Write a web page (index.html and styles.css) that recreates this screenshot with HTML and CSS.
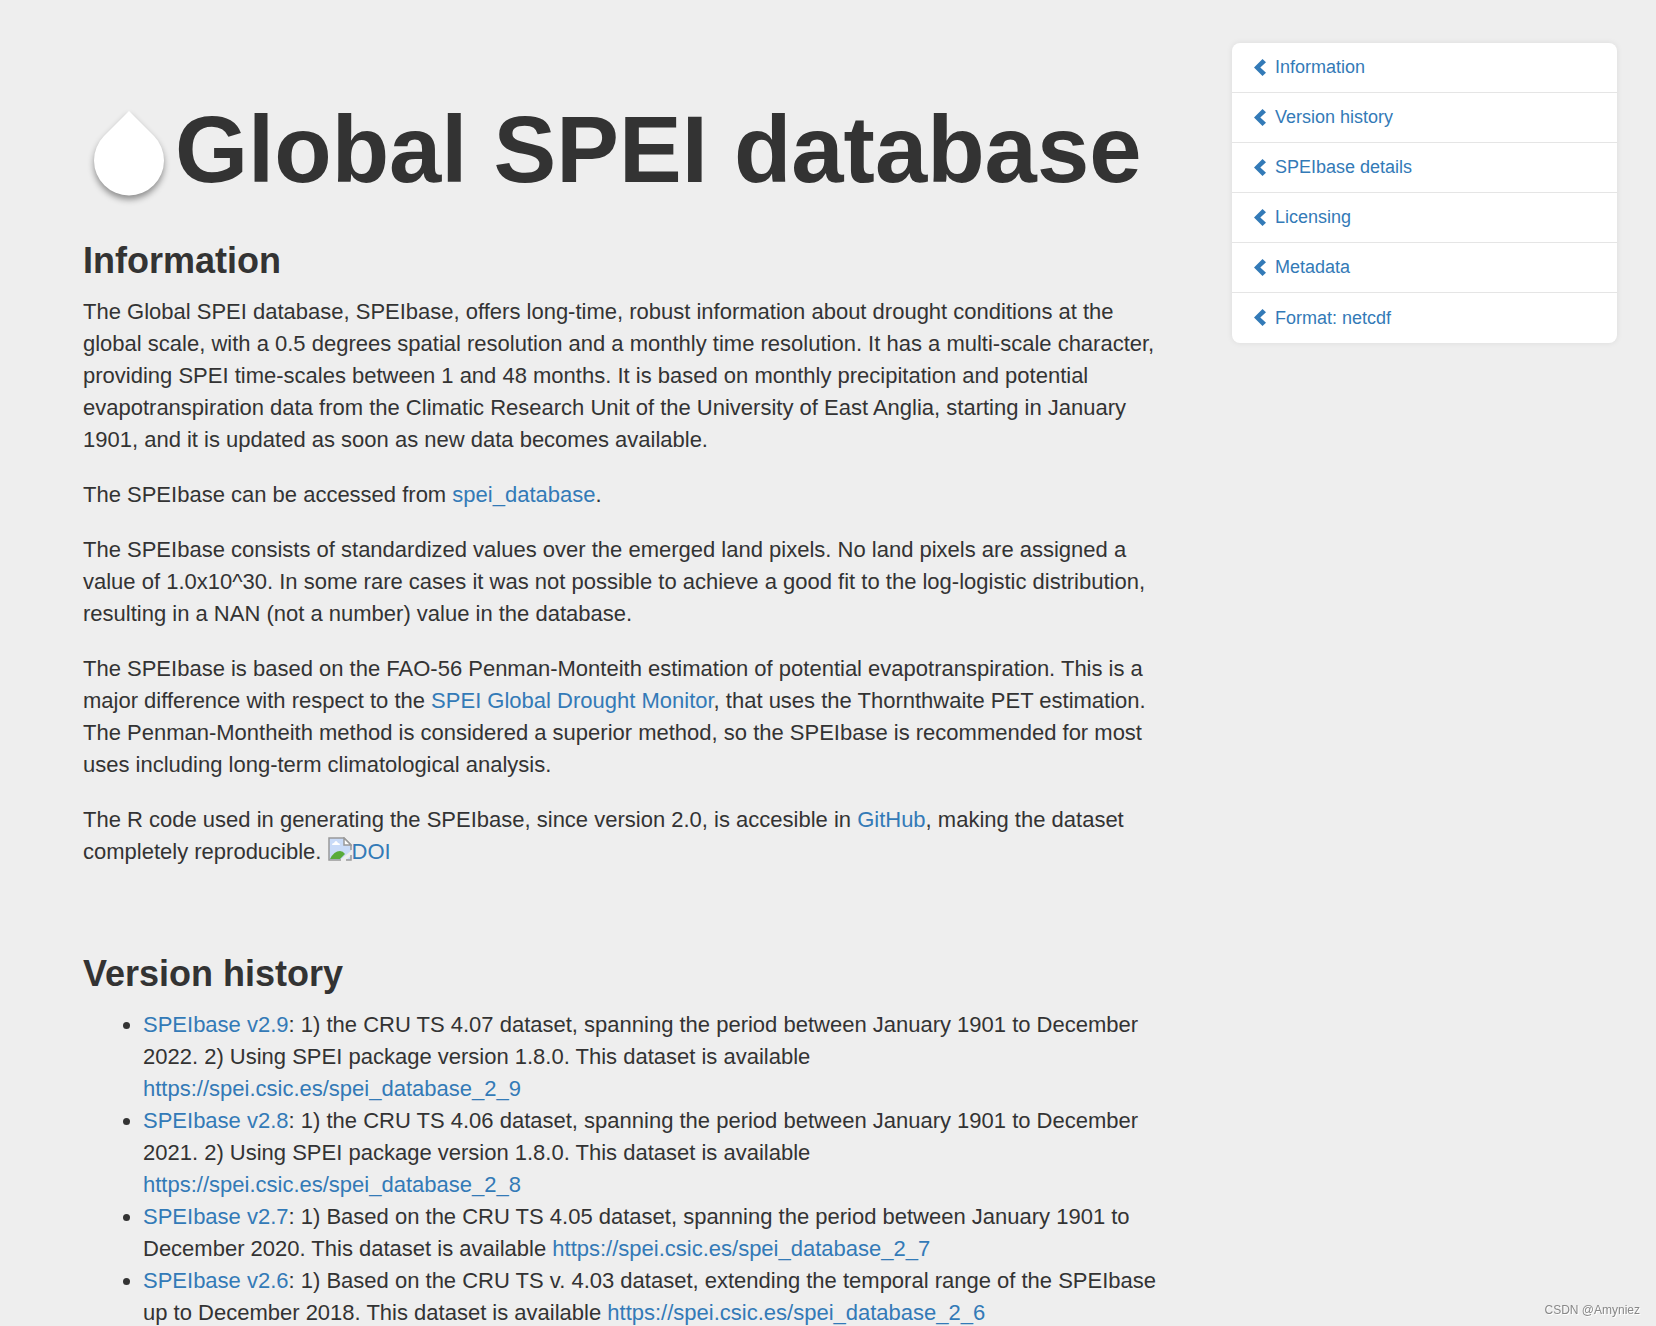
FILE: index.html
```html
<!DOCTYPE html>
<html lang="en">
<head>
    <meta charset="UTF-8">
    <meta name="viewport" content="width=device-width, initial-scale=1.0">
    <title>Global SPEI database</title>
    <link rel="stylesheet" href="styles.css">
</head>
<body>
    <svg class="sprite" width="0" height="0" aria-hidden="true">
        <symbol id="chevron" viewBox="0 0 12 17">
            <path d="M8.500 0 L12 3.300 L6.300 8.500 L12 13.700 L8.500 17 L0 8.500 Z" fill="currentColor"/>
        </symbol>
    </svg>
    <div class="page">
        <main class="content">
            <h1>
                <svg class="drop" viewBox="0 0 92 104" aria-hidden="true">
                    <path d="M46 13 L71 38 A35 35 0 1 1 21 38 Z" fill="#fff"/>
                </svg>
                <span>Global SPEI database</span>
            </h1>

            <section id="information">
                <h2>Information</h2>
                <p>The Global SPEI database, SPEIbase, offers long-time, robust information about drought conditions at the global scale, with a 0.5 degrees spatial resolution and a monthly time resolution. It has a multi-scale character, providing SPEI time-scales between 1 and 48 months. It is based on monthly precipitation and potential evapotranspiration data from the Climatic Research Unit of the University of East Anglia, starting in January 1901, and it is updated as soon as new data becomes available.</p>
                <p>The SPEIbase can be accessed from <a href="#">spei_database</a>.</p>
                <p>The SPEIbase consists of standardized values over the emerged land pixels. No land pixels are assigned a value of 1.0x10^30. In some rare cases it was not possible to achieve a good fit to the log-logistic distribution, resulting in a NAN (not a number) value in the database.</p>
                <p>The SPEIbase is based on the FAO-56 Penman-Monteith estimation of potential evapotranspiration. This is a major difference with respect to the <a href="#">SPEI Global Drought Monitor</a>, that uses the Thornthwaite PET estimation. The Penman-Montheith method is considered a superior method, so the SPEIbase is recommended for most uses including long-term climatological analysis.</p>
                <p>The R code used in generating the SPEIbase, since version 2.0, is accesible in <a href="#">GitHub</a>, making the dataset completely reproducible.
                    <a href="#"><svg class="doi" viewBox="0 0 24 24" aria-hidden="true">
                        <path d="M1 1 H16 L23 8 V23 H1 Z" fill="#c9dbf8"/>
                        <path d="M4 8 Q4 6 6 6 Q8 2 10 6 Q12 6 12 8 Z" fill="#fff"/>
                        <path d="M2 22 Q6 14 12 14 Q15 14 17 17 L12 22 Z" fill="#58ab3a"/>
                        <path d="M12 23 L24 13 V18 L18 23 Z" fill="#eee"/>
                        <path d="M13 23 H1 V1 H16 L23 8 V13 M23 18 V23 H18" fill="none" stroke="#999" stroke-width="1.500"/>
                        <path d="M16 1 V8 H23 Z" fill="#fff" stroke="#999" stroke-width="1.500"/>
                    </svg>DOI</a></p>
            </section>

            <section id="version-history">
                <h2>Version history</h2>
                <ul>
                    <li><a href="#">SPEIbase v2.9</a>: 1) the CRU TS 4.07 dataset, spanning the period between January 1901 to December 2022. 2) Using SPEI package version 1.8.0. This dataset is available <a href="#">https://spei.csic.es/spei_database_2_9</a></li>
                    <li><a href="#">SPEIbase v2.8</a>: 1) the CRU TS 4.06 dataset, spanning the period between January 1901 to December 2021. 2) Using SPEI package version 1.8.0. This dataset is available <a href="#">https://spei.csic.es/spei_database_2_8</a></li>
                    <li><a href="#">SPEIbase v2.7</a>: 1) Based on the CRU TS 4.05 dataset, spanning the period between January 1901 to December 2020. This dataset is available <a href="#">https://spei.csic.es/spei_database_2_7</a></li>
                    <li><a href="#">SPEIbase v2.6</a>: 1) Based on the CRU TS v. 4.03 dataset, extending the temporal range of the SPEIbase up to December 2018. This dataset is available <a href="#">https://spei.csic.es/spei_database_2_6</a></li>
                </ul>
            </section>
        </main>

        <nav class="sidenav">
            <a href="#information"><svg><use href="#chevron"/></svg>Information</a>
            <a href="#version-history"><svg><use href="#chevron"/></svg>Version history</a>
            <a href="#"><svg><use href="#chevron"/></svg>SPEIbase details</a>
            <a href="#"><svg><use href="#chevron"/></svg>Licensing</a>
            <a href="#"><svg><use href="#chevron"/></svg>Metadata</a>
            <a href="#"><svg><use href="#chevron"/></svg>Format: netcdf</a>
        </nav>
    </div>
    <div class="watermark">CSDN @Amyniez</div>
</body>
</html>
```

FILE: styles.css
```css
* {
    box-sizing: border-box;
}
body {
    margin: 0;
    background: #eee;
    color: #333;
    font-family: "Liberation Sans", Arial, sans-serif;
    font-size: 22px;
    line-height: 32px;
}
a {
    color: #337ab7;
    text-decoration: none;
}
a:hover {
    text-decoration: underline;
}
.sprite {
    position: absolute;
}
.page {
    display: flex;
    align-items: flex-start;
    gap: 66px;
    padding: 0 39px 0 83px;
}
.content {
    flex: 1;
    padding-top: 98px;
}
h1 {
    display: flex;
    margin: 0 0 39px;
    font-size: 94px;
    line-height: 104px;
    white-space: nowrap;
}
.drop {
    flex: none;
    width: 92px;
    height: 104px;
    overflow: visible;
    filter: drop-shadow(0 4px 3px rgba(0, 0, 0, 0.4));
}
h2 {
    margin: 0 0 15px;
    font-size: 36px;
    line-height: 40px;
}
p {
    margin: 0 0 23px;
}
#information {
    margin-bottom: 86px;
}
.doi {
    width: 24px;
    height: 24px;
    vertical-align: -2px;
}
ul {
    margin: 0;
    padding-left: 60px;
}
.sidenav {
    flex: none;
    width: 385px;
    margin-top: 43px;
    background: #fff;
    border-radius: 8px;
    box-shadow: 0 0 6px rgba(0, 0, 0, 0.08);
    font-size: 18px;
    line-height: 26px;
}
.sidenav a {
    display: flex;
    align-items: center;
    gap: 9px;
    height: 50px;
    padding: 0 22px 1px;
    border-bottom: 1px solid #e5e5e5;
}
.sidenav a:last-child {
    border-bottom: none;
}
.sidenav svg {
    width: 12px;
    height: 17px;
}
.watermark {
    position: fixed;
    right: 16px;
    bottom: 8px;
    color: #888;
    font-size: 12px;
    line-height: 16px;
    text-shadow: 1px 1px 0 #fff;
}
```
